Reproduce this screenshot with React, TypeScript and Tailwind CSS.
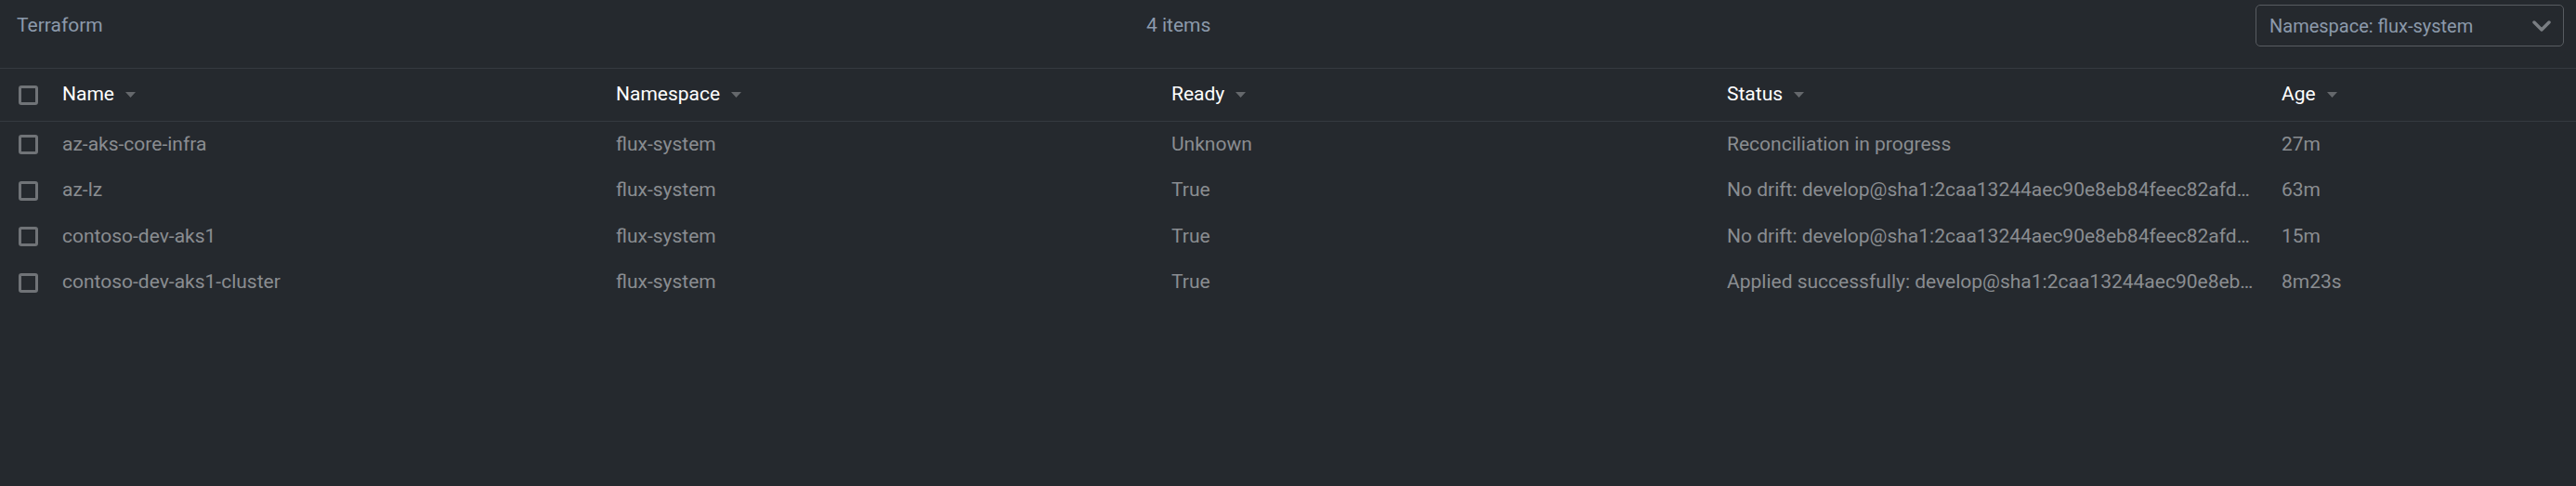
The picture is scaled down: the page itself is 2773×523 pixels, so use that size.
type Row = {
  name: string;
  namespace: string;
  ready: string;
  status: string;
  age: string;
};

const rows: Row[] = [
  {
    name: "az-aks-core-infra",
    namespace: "flux-system",
    ready: "Unknown",
    status: "Reconciliation in progress",
    age: "27m",
  },
  {
    name: "az-lz",
    namespace: "flux-system",
    ready: "True",
    status: "No drift: develop@sha1:2caa13244aec90e8eb84feec82afd7b1c3e9a0f2",
    age: "63m",
  },
  {
    name: "contoso-dev-aks1",
    namespace: "flux-system",
    ready: "True",
    status: "No drift: develop@sha1:2caa13244aec90e8eb84feec82afd7b1c3e9a0f2",
    age: "15m",
  },
  {
    name: "contoso-dev-aks1-cluster",
    namespace: "flux-system",
    ready: "True",
    status: "Applied successfully: develop@sha1:2caa13244aec90e8eb84feec82afd7b1c3e9a0f2",
    age: "8m23s",
  },
];

const columns = ["Name", "Namespace", "Ready", "Status", "Age"];

const gridCols = "grid grid-cols-[67px_596px_598px_598px_597px_1fr]";

function Checkbox() {
  return (
    <span className="block w-[21px] h-[21px] rounded-[3px] border-[3px] border-[#707377]" />
  );
}

function SortArrow() {
  return (
    <svg width="11" height="6" viewBox="0 0 11 6" className="ml-3 shrink-0">
      <path d="M0 0 L11 0 L5.5 6 Z" fill="#65686c" />
    </svg>
  );
}

export default function App() {
  return (
    <div className="w-full h-[523px] bg-[#25292e] font-['Roboto',sans-serif] text-[21px] overflow-hidden">
      {/* toolbar */}
      <div className="flex items-center h-[74px] pb-[18px] border-b border-[#353a40]">
        <div className="w-[1234px] pl-[18px] text-[#8c9aab]">Terraform</div>
        <div className="flex-1 text-[#8c9aab]">4 items</div>
        <div className="mr-[13px] flex items-center w-[332px] h-[45px] rounded-[5px] border border-[#585c61] pl-[14px] pr-[12px]">
          <span className="flex-1 text-[#8c9aab] text-[20px]">Namespace: flux-system</span>
          <svg width="20" height="12" viewBox="0 0 20 12" className="mr-[1px]">
            <path
              d="M2 2 L10 10 L18 2"
              fill="none"
              stroke="#7a7e83"
              strokeWidth="3.5"
              strokeLinecap="round"
              strokeLinejoin="round"
            />
          </svg>
        </div>
      </div>

      {/* header */}
      <div className={`${gridCols} h-[57px] items-center border-b border-[#353a40]`}>
        <div className="pl-[20px]">
          <Checkbox />
        </div>
        {columns.map((c) => (
          <div key={c} className="flex items-center text-white">
            {c}
            <SortArrow />
          </div>
        ))}
      </div>

      {/* rows */}
      {rows.map((r) => (
        <div key={r.name} className={`${gridCols} h-[49.5px] items-center text-[#8a8d91]`}>
          <div className="pl-[20px]">
            <Checkbox />
          </div>
          <div className="truncate pr-6 pb-[1px]">{r.name}</div>
          <div className="truncate pr-6 pb-[1px]">{r.namespace}</div>
          <div className="truncate pr-6 pb-[1px]">{r.ready}</div>
          <div className="truncate pr-6 pb-[1px]">{r.status}</div>
          <div className="truncate pr-6 pb-[1px]">{r.age}</div>
        </div>
      ))}
    </div>
  );
}
